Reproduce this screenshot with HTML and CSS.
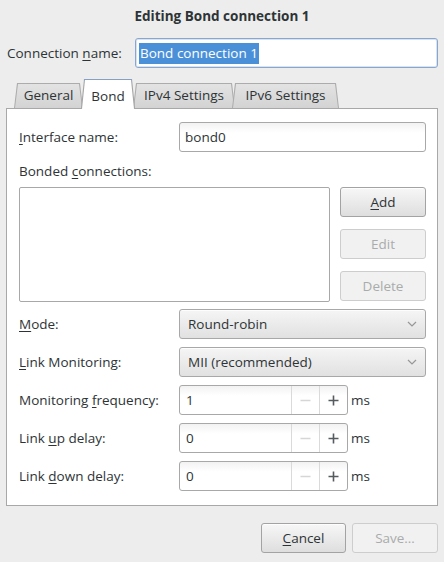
FILE: index.html
```html
<!DOCTYPE html>
<html>
<head>
<meta charset="utf-8">
<title>Editing Bond connection 1</title>
<link rel="stylesheet" href="styles.css">
</head>
<body>
<div class="window">
  <header class="titlebar">Editing Bond connection 1</header>
  <div class="name-row">
    <span class="name-label">Connection <u>n</u>ame:</span>
    <div class="entry focus"><span class="sel">Bond connection 1</span></div>
  </div>
  <div class="notebook">
    <div class="tabs">
      <div class="tab t-general"><span>General</span></div>
      <div class="tab t-ipv4"><span>IPv4 Settings</span></div>
      <div class="tab t-ipv6"><span>IPv6 Settings</span></div>
      <div class="tab active t-bond"><span>Bond</span></div>
    </div>
    <div class="page">
      <div class="row">
        <span class="lbl"><u>I</u>nterface name:</span>
        <div class="entry wide">bond0</div>
      </div>
      <div class="section-label"><span>Bonded <u>c</u>onnections:</span></div>
      <div class="bonded">
        <div class="list"></div>
        <div class="side-buttons">
          <button class="btn"><u>A</u>dd</button>
          <button class="btn disabled">Edit</button>
          <button class="btn disabled">Delete</button>
        </div>
      </div>
      <div class="rows">
        <div class="row">
          <span class="lbl"><u>M</u>ode:</span>
          <div class="combo"><span>Round-robin</span>
            <svg class="chev" width="10" height="6" viewBox="0 0 10 6"><polyline points="1,1 5,5 9,1" fill="none" stroke="#979797" stroke-width="1.2"/></svg>
          </div>
        </div>
        <div class="row">
          <span class="lbl"><u>L</u>ink Monitoring:</span>
          <div class="combo"><span>MII (recommended)</span>
            <svg class="chev" width="10" height="6" viewBox="0 0 10 6"><polyline points="1,1 5,5 9,1" fill="none" stroke="#979797" stroke-width="1.2"/></svg>
          </div>
        </div>
        <div class="row">
          <span class="lbl">Monitoring <u>f</u>requency:</span>
          <div class="spin">
            <span class="val">1</span>
            <span class="sbtn"><svg width="11" height="11" viewBox="0 0 11 11"><line x1="0.5" y1="5.5" x2="10.5" y2="5.5" stroke="#d6d6d6" stroke-width="1.5"/></svg></span>
            <span class="sbtn"><svg width="11" height="11" viewBox="0 0 11 11"><line x1="0.5" y1="5.5" x2="10.5" y2="5.5" stroke="#555b5e" stroke-width="1.6"/><line x1="5.5" y1="0.5" x2="5.5" y2="10.5" stroke="#555b5e" stroke-width="1.6"/></svg></span>
          </div>
          <span class="unit">ms</span>
        </div>
        <div class="row">
          <span class="lbl">Link <u>u</u>p delay:</span>
          <div class="spin">
            <span class="val">0</span>
            <span class="sbtn"><svg width="11" height="11" viewBox="0 0 11 11"><line x1="0.5" y1="5.5" x2="10.5" y2="5.5" stroke="#d6d6d6" stroke-width="1.5"/></svg></span>
            <span class="sbtn"><svg width="11" height="11" viewBox="0 0 11 11"><line x1="0.5" y1="5.5" x2="10.5" y2="5.5" stroke="#555b5e" stroke-width="1.6"/><line x1="5.5" y1="0.5" x2="5.5" y2="10.5" stroke="#555b5e" stroke-width="1.6"/></svg></span>
          </div>
          <span class="unit">ms</span>
        </div>
        <div class="row">
          <span class="lbl">Link <u>d</u>own delay:</span>
          <div class="spin">
            <span class="val">0</span>
            <span class="sbtn"><svg width="11" height="11" viewBox="0 0 11 11"><line x1="0.5" y1="5.5" x2="10.5" y2="5.5" stroke="#d6d6d6" stroke-width="1.5"/></svg></span>
            <span class="sbtn"><svg width="11" height="11" viewBox="0 0 11 11"><line x1="0.5" y1="5.5" x2="10.5" y2="5.5" stroke="#555b5e" stroke-width="1.6"/><line x1="5.5" y1="0.5" x2="5.5" y2="10.5" stroke="#555b5e" stroke-width="1.6"/></svg></span>
          </div>
          <span class="unit">ms</span>
        </div>
      </div>
    </div>
  </div>
  <div class="actions">
    <button class="btn cancel"><u>C</u>ancel</button>
    <button class="btn disabled save">Save…</button>
  </div>
</div>
</body>
</html>
```
FILE: styles.css
```css
* { box-sizing: border-box; }
html, body { margin: 0; padding: 0; }
body {
  width: 444px;
  height: 562px;
  overflow: hidden;
  background: #ededed;
  font-family: "Open Sans", "DejaVu Sans", sans-serif;
  font-size: 13.5px;
  line-height: 17px;
  color: #2e3436;
}
u { text-decoration: underline; text-underline-offset: 2px; text-decoration-thickness: 1px; }

.window {
  height: 562px;
  display: flex;
  flex-direction: column;
  padding: 0 6px;
  background: #ededed;
  border-radius: 6px 6px 0 0;
}

.titlebar {
  height: 33px;
  display: flex;
  align-items: center;
  justify-content: center;
  font-weight: bold;
}

.name-row {
  display: flex;
  align-items: center;
  height: 30px;
  margin-top: 5px;
}
.name-label { width: 129px; padding-left: 1px; }

.entry {
  height: 30px;
  display: flex;
  align-items: center;
  padding-left: 4px;
  border: 1px solid #a8a8a8;
  border-radius: 3px;
  background: linear-gradient(#f2f2f2, #ffffff 35%);
}
.entry.focus {
  flex: 1;
  border-color: #8aa6cd;
  box-shadow: inset 0 0 0 1px rgba(140, 175, 220, 0.35);
  background: #fff;
  padding-left: 3px;
}
.sel {
  background: #4a90d9;
  color: #fff;
  padding: 2px 1px;
}

.notebook { margin-top: 11px; }
.tabs {
  position: relative;
  z-index: 1;
  height: 30px;
  margin-bottom: -1px;
  padding-left: 8px;
}
.tab {
  position: absolute;
  bottom: 1px;
  height: 25px;
  display: flex;
  align-items: center;
  justify-content: center;
}
.tab span { position: relative; z-index: 2; }
.tab::before,
.tab::after {
  content: "";
  position: absolute;
  clip-path: polygon(0 100%, 3px 0, calc(100% - 3px) 0, 100% 100%);
}
.tab::before { inset: 0; background: #acacac; }
.tab::after {
  inset: 1px 1px 0 1px;
  background: linear-gradient(#e3e3e3, #d3d3d3);
}
.t-general { left: 8px; width: 69px; }
.t-bond { left: 75px; width: 54px; }
.t-ipv4 { left: 127px; width: 102px; }
.t-ipv6 { left: 226px; width: 107px; }
.tab.active {
  bottom: 0;
  height: 30px;
  padding-top: 4px;
  z-index: 3;
}
.tab.active::before {
  background: linear-gradient(#7f9dc6, #9aa9bb 2px, #a4a4a4 4px);
  bottom: 1px;
}
.tab.active::after {
  inset: 1px 1px 0 1px;
  background: #ffffff;
}

.page {
  height: 398px;
  background: #fff;
  border: 1px solid #a8a8a8;
  padding: 13px 11px 14px 12px;
}
.row {
  display: flex;
  align-items: center;
  height: 30px;
}
.lbl { width: 160px; flex: none; }
.entry.wide { flex: 1; padding-left: 5px; }

.section-label {
  margin-top: 10px;
  height: 18px;
  display: flex;
  align-items: center;
}
.bonded {
  margin-top: 7px;
  height: 115px;
  display: flex;
  gap: 10px;
}
.list {
  width: 311px;
  border: 1px solid #a8a8a8;
  border-radius: 2px;
  background: #fff;
}
.side-buttons {
  flex: 1;
  display: flex;
  flex-direction: column;
  gap: 12px;
}

.btn {
  height: 30px;
  font: inherit;
  color: #2e3436;
  border: 1px solid #a3a3a3;
  border-radius: 3px;
  background: linear-gradient(#f7f7f7, #dedede);
  box-shadow: inset 0 1px rgba(255, 255, 255, 0.8);
  padding: 0;
  display: flex;
  align-items: center;
  justify-content: center;
}
.btn.disabled {
  color: #a9acab;
  border-color: #cdcdcd;
  background: #f1f1f1;
  box-shadow: none;
}

.rows {
  margin-top: 7px;
  display: flex;
  flex-direction: column;
  gap: 8px;
}
.combo {
  flex: 1;
  height: 30px;
  display: flex;
  align-items: center;
  justify-content: space-between;
  padding: 0 8px 0 8px;
  border: 1px solid #a8a8a8;
  border-radius: 3px;
  background: linear-gradient(#f5f5f5, #e1e1e1);
  box-shadow: inset 0 1px rgba(255, 255, 255, 0.8);
}
.chev { display: block; }

.spin {
  width: 169px;
  height: 30px;
  display: flex;
  border: 1px solid #a8a8a8;
  border-radius: 3px;
  background: linear-gradient(#f2f2f2, #ffffff 35%);
  overflow: hidden;
}
.val {
  flex: 1;
  display: flex;
  align-items: center;
  padding-left: 6px;
}
.sbtn {
  width: 28px;
  border-left: 1px solid #dadada;
  display: flex;
  align-items: center;
  justify-content: center;
}
.unit { margin-left: 3px; }

.actions {
  margin-top: 17px;
  display: flex;
  justify-content: flex-end;
  gap: 6px;
}
.cancel { width: 85px; }
.save { width: 86px; }
```
